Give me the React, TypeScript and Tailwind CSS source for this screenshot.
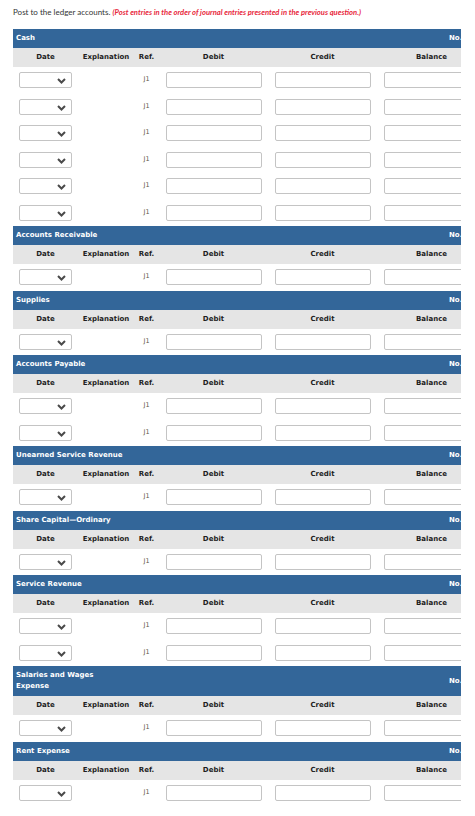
import React from "react";

type Account = { name: string; rows: number };

const accounts: Account[] = [
  { name: "Cash", rows: 6 },
  { name: "Accounts Receivable", rows: 1 },
  { name: "Supplies", rows: 1 },
  { name: "Accounts Payable", rows: 2 },
  { name: "Unearned Service Revenue", rows: 1 },
  { name: "Share Capital\u2014Ordinary", rows: 1 },
  { name: "Service Revenue", rows: 2 },
  { name: "Salaries and Wages Expense", rows: 1 },
  { name: "Rent Expense", rows: 1 },
];

const grid = "grid grid-cols-[65px_56px_25px_109px_109px_109px]";
const hdrFont = "font-['DejaVu_Sans',sans-serif] font-bold text-[7px]";

function Chevron() {
  return (
    <svg width="9" height="6" viewBox="0 0 9 6" className="absolute left-[37px] top-[5px]">
      <path d="M1 1 L4.5 4.5 L8 1" fill="none" stroke="#4a4a4a" strokeWidth="2" />
    </svg>
  );
}

function Row() {
  return (
    <div className={`${grid} h-[26.5px] items-center`}>
      <div className="pl-[6px]">
        <div className="relative w-[53px] h-[16px] border border-[#c4c4c4] rounded-[2px] bg-white">
          <Chevron />
        </div>
      </div>
      <div />
      <div className="text-center font-['DejaVu_Sans',sans-serif] text-[6.5px] text-[#5e5748]">J1</div>
      {[0, 1, 2].map((i) => (
        <div key={i} className="pl-[6.5px]">
          <div className="w-[96px] h-[16px] border border-[#c4c4c4] rounded-[2px] bg-white" />
        </div>
      ))}
    </div>
  );
}

function Section({ a }: { a: Account }) {
  return (
    <div>
      <div className={`flex items-center bg-[#336699] text-white ${hdrFont} leading-[11px] py-[4px]`}>
        <div className="w-[113px] pl-[3px]">{a.name}</div>
        <div className="ml-[323px] whitespace-nowrap">No.</div>
      </div>
      <div className={`${grid} h-[19px] items-center bg-[#e5e5e5] text-[#1e1e1e] ${hdrFont}`}>
        <div className="text-center">Date</div>
        <div className="text-center">Explanation</div>
        <div className="text-center">Ref.</div>
        <div className="text-center">Debit</div>
        <div className="text-center">Credit</div>
        <div className="text-center">Balance</div>
      </div>
      {Array.from({ length: a.rows }).map((_, i) => (
        <Row key={i} />
      ))}
    </div>
  );
}

export default function App() {
  return (
    <div className="w-[475px] min-h-[816px] bg-white px-[13px] pt-[7px]">
      <div className="h-[22px] font-['Lato',sans-serif] text-[8px] leading-[10px] text-[#333] whitespace-nowrap">
        Post to the ledger accounts.{" "}
        <span className="text-[#e8283c] italic font-bold text-[7.6px]">
          (Post entries in the order of journal entries presented in the previous question.)
        </span>
      </div>
      <div className="w-[448px] overflow-hidden">
        <div className="w-[480px]">
          {accounts.map((a) => (
            <Section key={a.name} a={a} />
          ))}
        </div>
      </div>
    </div>
  );
}
